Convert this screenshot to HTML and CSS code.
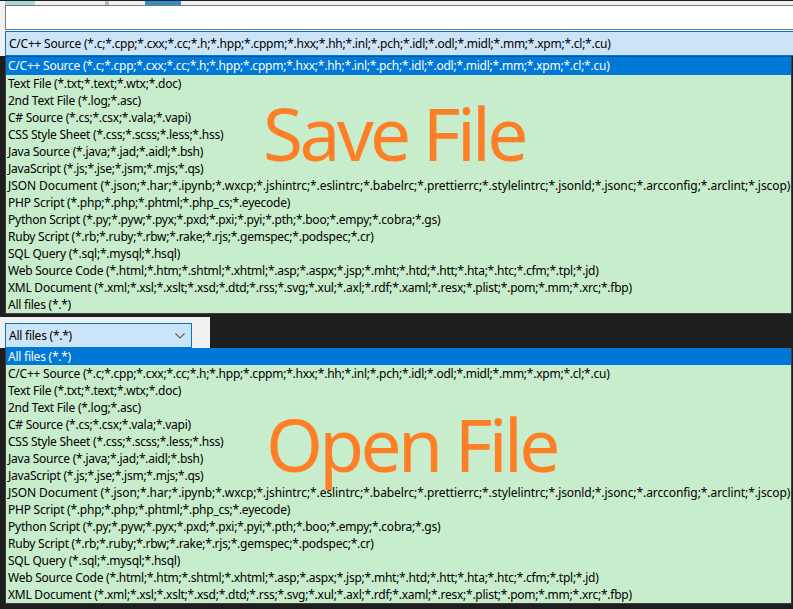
FILE: index.html
```html
<!DOCTYPE html>
<html lang="en">
<head>
    <meta charset="UTF-8">
    <title>File type filters</title>
    <link rel="stylesheet" href="styles.css">
</head>
<body>
    <div class="top-strip">
        <span class="bit bit-teal"></span>
        <span class="bit bit-gray"></span>
        <span class="bit bit-blue"></span>
    </div>

    <!-- save dialog -->
    <div class="pane pane-save">
        <div class="textbox"></div>
        <div class="combo combo-wide">C/C++ Source (*.c;*.cpp;*.cxx;*.cc;*.h;*.hpp;*.cppm;*.hxx;*.hh;*.inl;*.pch;*.idl;*.odl;*.midl;*.mm;*.xpm;*.cl;*.cu)</div>
    </div>
    <div class="drop">
        <ul class="list list-save">
            <li class="sel">C/C++ Source (*.c;*.cpp;*.cxx;*.cc;*.h;*.hpp;*.cppm;*.hxx;*.hh;*.inl;*.pch;*.idl;*.odl;*.midl;*.mm;*.xpm;*.cl;*.cu)</li>
            <li>Text File (*.txt;*.text;*.wtx;*.doc)</li>
            <li>2nd Text File (*.log;*.asc)</li>
            <li>C# Source (*.cs;*.csx;*.vala;*.vapi)</li>
            <li>CSS Style Sheet (*.css;*.scss;*.less;*.hss)</li>
            <li>Java Source (*.java;*.jad;*.aidl;*.bsh)</li>
            <li>JavaScript (*.js;*.jse;*.jsm;*.mjs;*.qs)</li>
            <li class="wide">JSON Document (*.json;*.har;*.ipynb;*.wxcp;*.jshintrc;*.eslintrc;*.babelrc;*.prettierrc;*.stylelintrc;*.jsonld;*.jsonc;*.arcconfig;*.arclint;*.jscop)</li>
            <li>PHP Script (*.php;*.php;*.phtml;*.php_cs;*.eyecode)</li>
            <li>Python Script (*.py;*.pyw;*.pyx;*.pxd;*.pxi;*.pyi;*.pth;*.boo;*.empy;*.cobra;*.gs)</li>
            <li>Ruby Script (*.rb;*.ruby;*.rbw;*.rake;*.rjs;*.gemspec;*.podspec;*.cr)</li>
            <li>SQL Query (*.sql;*.mysql;*.hsql)</li>
            <li>Web Source Code (*.html;*.htm;*.shtml;*.xhtml;*.asp;*.aspx;*.jsp;*.mht;*.htd;*.htt;*.hta;*.htc;*.cfm;*.tpl;*.jd)</li>
            <li>XML Document (*.xml;*.xsl;*.xslt;*.xsd;*.dtd;*.rss;*.svg;*.xul;*.axl;*.rdf;*.xaml;*.resx;*.plist;*.pom;*.mm;*.xrc;*.fbp)</li>
            <li>All files (*.*)</li>
        </ul>
        <div class="stamp stamp-save">Save File</div>
    </div>

    <!-- open dialog -->
    <div class="pane pane-open">
        <div class="combo combo-small">
            <span>All files (*.*)</span>
            <svg class="chev" width="10" height="6" viewBox="0 0 10 6"><path d="M0.5 0.5 L5 5 L9.5 0.5" fill="none" stroke="#606060" stroke-width="1.1"/></svg>
        </div>
    </div>
    <div class="drop">
        <ul class="list list-open">
            <li class="sel">All files (*.*)</li>
            <li>C/C++ Source (*.c;*.cpp;*.cxx;*.cc;*.h;*.hpp;*.cppm;*.hxx;*.hh;*.inl;*.pch;*.idl;*.odl;*.midl;*.mm;*.xpm;*.cl;*.cu)</li>
            <li>Text File (*.txt;*.text;*.wtx;*.doc)</li>
            <li>2nd Text File (*.log;*.asc)</li>
            <li>C# Source (*.cs;*.csx;*.vala;*.vapi)</li>
            <li>CSS Style Sheet (*.css;*.scss;*.less;*.hss)</li>
            <li>Java Source (*.java;*.jad;*.aidl;*.bsh)</li>
            <li>JavaScript (*.js;*.jse;*.jsm;*.mjs;*.qs)</li>
            <li class="wide">JSON Document (*.json;*.har;*.ipynb;*.wxcp;*.jshintrc;*.eslintrc;*.babelrc;*.prettierrc;*.stylelintrc;*.jsonld;*.jsonc;*.arcconfig;*.arclint;*.jscop)</li>
            <li>PHP Script (*.php;*.php;*.phtml;*.php_cs;*.eyecode)</li>
            <li>Python Script (*.py;*.pyw;*.pyx;*.pxd;*.pxi;*.pyi;*.pth;*.boo;*.empy;*.cobra;*.gs)</li>
            <li>Ruby Script (*.rb;*.ruby;*.rbw;*.rake;*.rjs;*.gemspec;*.podspec;*.cr)</li>
            <li>SQL Query (*.sql;*.mysql;*.hsql)</li>
            <li>Web Source Code (*.html;*.htm;*.shtml;*.xhtml;*.asp;*.aspx;*.jsp;*.mht;*.htd;*.htt;*.hta;*.htc;*.cfm;*.tpl;*.jd)</li>
            <li>XML Document (*.xml;*.xsl;*.xslt;*.xsd;*.dtd;*.rss;*.svg;*.xul;*.axl;*.rdf;*.xaml;*.resx;*.plist;*.pom;*.mm;*.xrc;*.fbp)</li>
        </ul>
        <div class="stamp stamp-open">Open File</div>
    </div>
</body>
</html>
```

FILE: styles.css
```css
html, body { margin: 0; padding: 0; }
body {
    width: 793px;
    height: 609px;
    overflow: hidden;
    background: #1e1e1e;
    font-family: "Noto Sans", "Open Sans", sans-serif;
    font-size: 12px;
    letter-spacing: -0.24px;
    color: #000;
}

.top-strip {
    height: 4px;
    border-top: 1px solid #1e1e1e;
    background: #f0f0f0;
    display: flex;
}
.bit { display: block; height: 4px; }
.bit-teal { width: 30px; margin-left: 5px; background: #a9d6de; }
.bit-gray { width: 4px; margin-left: 70px; background: #b8b8b8; }
.bit-blue { width: 36px; margin-left: 36px; background: #2d8fd0; }

.pane { background: #f0f0f0; }
.pane-save { padding: 0 0 0 5px; }
.pane-open { width: 205px; padding: 6px 0 0 5px; margin-top: 3px; height: 25px; }

.textbox {
    height: 23px;
    width: 800px;
    background: #fff;
    border: 1px solid #7a7a7a;
    border-right: none;
    margin-bottom: 1px;
}

.combo {
    box-sizing: border-box;
    background: #cce4f7;
    border: 1px solid #0078d7;
    display: flex;
    align-items: center;
    padding-left: 3px;
    white-space: nowrap;
}
.combo-wide { width: 800px; height: 25px; border-right: none; }
.combo-small { width: 187px; height: 25px; justify-content: space-between; padding-right: 6px; }
.chev { display: block; }

.drop { position: relative; padding-left: 5px; }
.list {
    list-style: none;
    margin: 0;
    padding: 0;
    width: 785px;
    background: #c7edcc;
    border: 1px solid #3c3c3c;
    border-top: none;
    overflow: hidden;
}
.list li {
    height: 17px;
    line-height: 17px;
    padding-left: 2px;
    white-space: nowrap;
}
.list li.wide { letter-spacing: -0.08px; }
.list li.sel { background: #0078d7; color: #fff; }
.list-save li.sel { border-top: 1px solid #005a9e; height: 18px; line-height: 18px; }

.stamp {
    position: absolute;
    color: #ff7f27;
    font-family: "Noto Sans", sans-serif;
    font-size: 73px;
    line-height: 1;
    letter-spacing: -3.7px;
    white-space: nowrap;
}
.stamp-save { left: 263px; top: 40px; }
.stamp-open { left: 266px; top: 59px; }
```
